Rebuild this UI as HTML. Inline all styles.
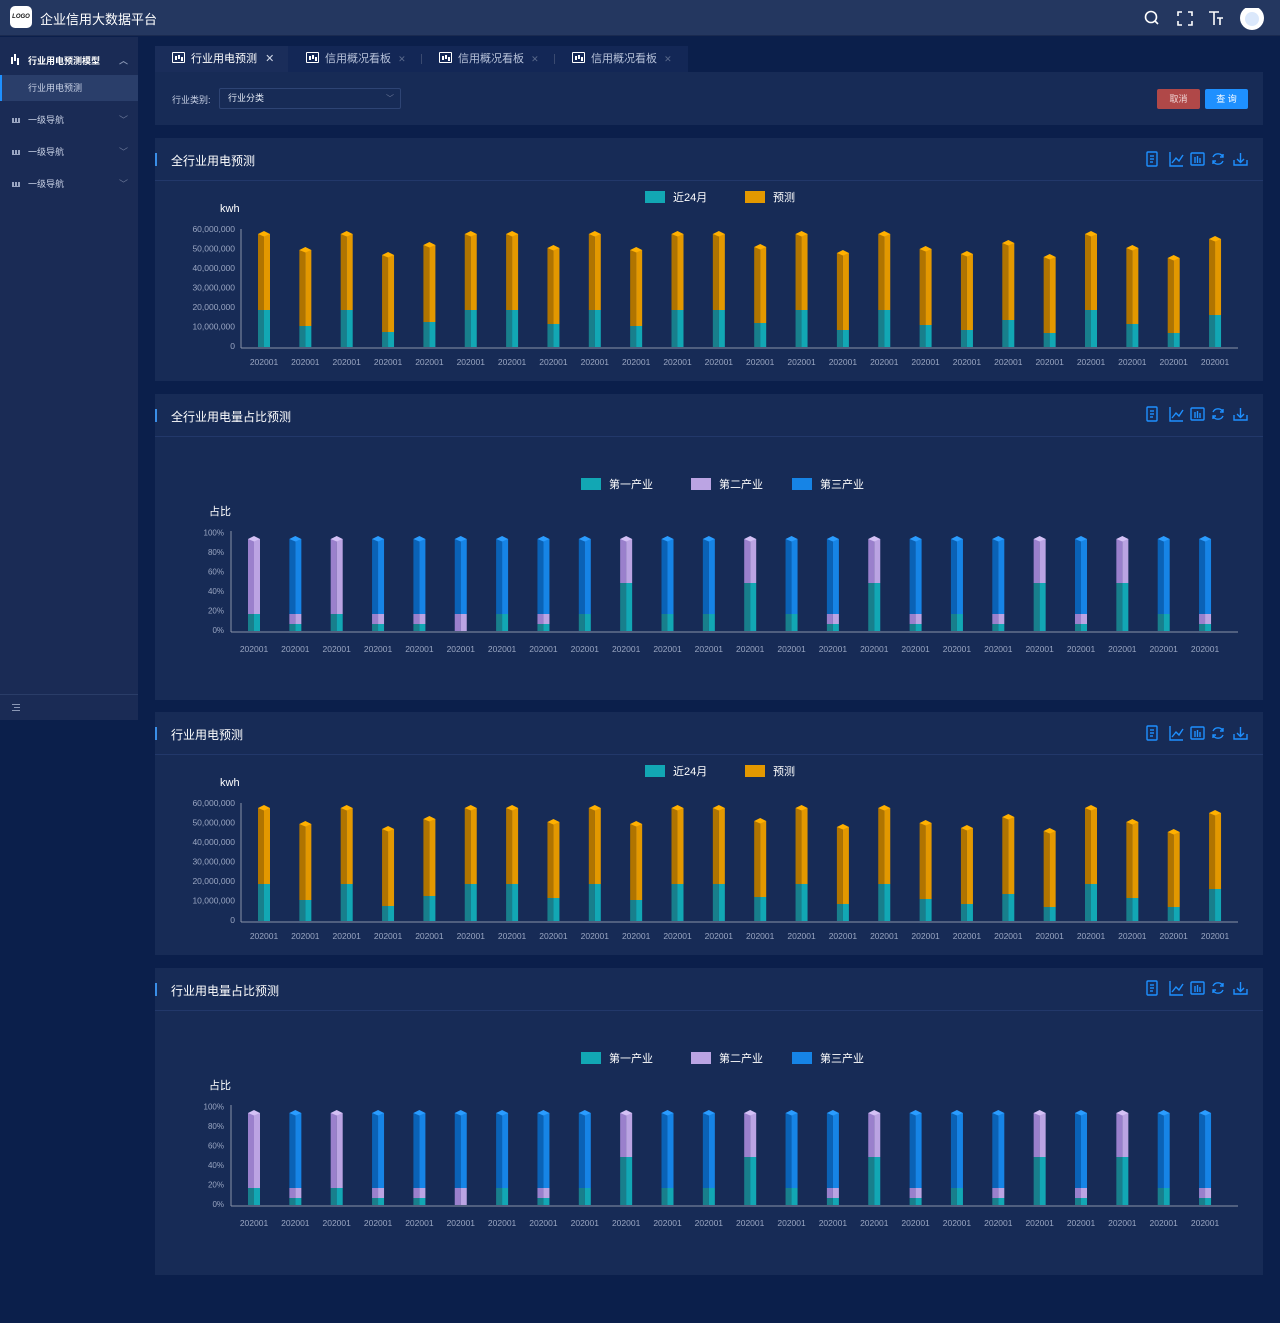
<!DOCTYPE html>
<html><head><meta charset="utf-8">
<style>
*{margin:0;padding:0;box-sizing:border-box}
body{width:1280px;height:1323px;background:#0b1f4b;font-family:"Liberation Sans","Noto Sans CJK SC",sans-serif;color:#e6ecf7;position:relative;overflow:hidden}
.hdr{position:absolute;left:0;top:0;width:1280px;height:36px;background:#243760;border-bottom:1px solid #1a2a50}
.logo{position:absolute;left:10px;top:6px;width:22px;height:22px;background:#fff;border-radius:5px;color:#111;font-size:6px;font-weight:bold;font-style:italic;text-align:center;line-height:22px}
.title{position:absolute;left:40px;top:9px;font-size:13px;color:#fff}
.side{position:absolute;left:0;top:37px;width:138px;height:683px;background:#1a2b55}
.side .it{position:absolute;left:0;width:138px;height:26px;font-size:9px;line-height:26px;color:#c9d2e6}
.abs{position:absolute}
.panel{position:absolute;left:155px;width:1108px;background:#172b56}
.ph{position:absolute;left:0;top:0;width:1108px;height:43px;border-bottom:1px solid #22386a}
.ph .mk{position:absolute;left:0;top:15px;width:2px;height:13px;background:#3a8ee8}
.ph .t{position:absolute;left:16px;top:14px;font-size:12px;color:#fff}
.tab{position:absolute;top:46px;height:26px;font-size:11px;line-height:26px;color:#b7c2d9}
.ti{display:inline-block;width:13px;height:11px;border:1.5px solid #fff;border-radius:1px;vertical-align:-1px;margin-right:6px;position:relative}
.ti:after{content:"";position:absolute;left:2px;top:3px;width:1.5px;height:4px;background:#fff;box-shadow:3px -1px 0 #fff,6px 1px 0 #fff}
</style></head><body>
<div class="hdr">
<div class="logo">LOGO</div>
<div class="title">企业信用大数据平台</div>
<svg class="abs" style="left:1140px;top:8px" width="130" height="22" viewBox="0 0 130 22">
<g fill="none" stroke="#fff" stroke-width="1.6">
<circle cx="11" cy="9" r="5.5"/><line x1="15" y1="13" x2="18" y2="16"/>
<path d="M38 8V4h4M48 4h4v4M52 13v4h-4M42 17h-4v-4"/>
<path d="M69 4h10M74 4v13M77 10h6M80 10v7"/>
</g>
<circle cx="112" cy="10" r="12" fill="#fff"/>
<circle cx="112" cy="11" r="7" fill="#dbe8fb"/>
</svg>
</div>
<div class="side">
<div class="it" style="top:11px;color:#fff;font-weight:bold"><span style="position:absolute;left:11px;top:9px;width:2px;height:7px;background:#fff;box-shadow:3px -3px 0 #fff,6px 1px 0 #fff"></span><span style="margin-left:28px">行业用电预测模型</span><span style="position:absolute;left:119px;top:0;color:#8a97b5">︿</span></div>
<div class="it" style="top:38px;background:#2a3e6a;border-left:2px solid #1e90ff"><span style="margin-left:26px">行业用电预测</span></div>
<div class="it" style="top:70px"><span style="position:absolute;left:12px;top:11px;width:8px;height:5px;border-bottom:1px solid #9aa6c2;background:linear-gradient(90deg,#9aa6c2 2px,transparent 2px 3px,#9aa6c2 3px 5px,transparent 5px 6px,#9aa6c2 6px)"></span><span style="margin-left:28px">一级导航</span><span style="position:absolute;left:119px;color:#6a7797">﹀</span></div>
<div class="it" style="top:102px"><span style="position:absolute;left:12px;top:11px;width:8px;height:5px;border-bottom:1px solid #9aa6c2;background:linear-gradient(90deg,#9aa6c2 2px,transparent 2px 3px,#9aa6c2 3px 5px,transparent 5px 6px,#9aa6c2 6px)"></span><span style="margin-left:28px">一级导航</span><span style="position:absolute;left:119px;color:#6a7797">﹀</span></div>
<div class="it" style="top:134px"><span style="position:absolute;left:12px;top:11px;width:8px;height:5px;border-bottom:1px solid #9aa6c2;background:linear-gradient(90deg,#9aa6c2 2px,transparent 2px 3px,#9aa6c2 3px 5px,transparent 5px 6px,#9aa6c2 6px)"></span><span style="margin-left:28px">一级导航</span><span style="position:absolute;left:119px;color:#6a7797">﹀</span></div>
<div class="abs" style="left:0;top:657px;width:138px;height:1px;background:#2a3d68"></div>
<div class="abs" style="left:12px;top:667px;width:8px;height:7px;border-top:1px solid #8a97b5;border-bottom:1px solid #8a97b5"><div style="margin-top:2px;height:1px;background:#8a97b5;margin-left:2px"></div></div>
</div>
<div class="abs" style="left:155px;top:46px;width:533px;height:26px;background:#132756"></div>
<div class="tab" style="left:155px;width:133px;background:#1a2d5a;color:#fff;padding-left:17px"><span class="ti"></span>行业用电预测 <span style="margin-left:5px;color:#cfd6e6">✕</span></div>
<div class="tab" style="left:306px"><span class="ti"></span>信用概况看板 <span style="margin-left:4px;color:#5a6a8c;font-size:9px">✕</span></div>
<div class="abs" style="left:421px;top:54px;width:1px;height:10px;background:#3a4a70"></div>
<div class="tab" style="left:439px"><span class="ti"></span>信用概况看板 <span style="margin-left:4px;color:#5a6a8c;font-size:9px">✕</span></div>
<div class="abs" style="left:554px;top:54px;width:1px;height:10px;background:#3a4a70"></div>
<div class="tab" style="left:572px"><span class="ti"></span>信用概况看板 <span style="margin-left:4px;color:#5a6a8c;font-size:9px">✕</span></div>
<div class="panel" style="top:72px;height:53px">
<div class="abs" style="left:17px;top:21px;font-size:9px;color:#c9d2e6">行业类别:</div>
<div class="abs" style="left:64px;top:16px;width:182px;height:21px;border:1px solid #2e4474;border-radius:2px;font-size:9px;line-height:19px;padding-left:8px;color:#e6ecf7">行业分类<span style="position:absolute;right:6px;color:#6a7797;font-size:8px">﹀</span></div>
<div class="abs" style="left:1002px;top:17px;width:43px;height:20px;background:#b04848;border-radius:2px;font-size:9px;line-height:20px;text-align:center;color:#f0d8d8">取消</div>
<div class="abs" style="left:1050px;top:17px;width:43px;height:20px;background:#1e90ff;border-radius:2px;font-size:9px;line-height:20px;text-align:center;color:#fff">查 询</div>
</div>
<div class="panel" style="top:138px;height:243px"><div class="ph"><div class="mk"></div><div class="t">全行业用电预测</div></div></div>
<div class="panel" style="top:394px;height:306px"><div class="ph"><div class="mk"></div><div class="t">全行业用电量占比预测</div></div></div>
<div class="panel" style="top:712px;height:243px"><div class="ph"><div class="mk"></div><div class="t">行业用电预测</div></div></div>
<div class="panel" style="top:968px;height:307px"><div class="ph"><div class="mk"></div><div class="t">行业用电量占比预测</div></div></div>
<svg id="ov" class="abs" style="left:0;top:0" width="1280" height="1323" font-family="Liberation Sans, Noto Sans CJK SC, sans-serif"></svg>
<script>
var s='';
function icons(y){var g='<g fill="none" stroke="#1e90ff" stroke-width="1.4" transform="translate(0,'+(y-8)+')">';
g+='<rect x="1147" y="1" width="10" height="14" rx="1"/><line x1="1150" y1="5" x2="1154" y2="5"/><line x1="1150" y1="8" x2="1154" y2="8"/><line x1="1150" y1="11" x2="1153" y2="11"/>';
g+='<path d="M1170 1v14h13M1172 12l4-5 3 3 4-6"/>';
g+='<rect x="1191" y="2" width="13" height="12" rx="1"/><path d="M1195 6v6M1197.5 5v7M1200 7v5"/>';
g+='<path d="M1213 6a5.5 5.5 0 0 1 10 0M1223 10a5.5 5.5 0 0 1 -10 0"/><path d="M1223 3v3h-3M1213 13v-3h3" />';
g+='<path d="M1234 9v5h13v-5M1240.5 2v9M1237 8l3.5 3.5 3.5-3.5"/></g>';return g;}
function bar(cx,segs,w){ // segs: [ [yTop,yBot,dark,light,topc] ]
 var r='';for(var i=0;i<segs.length;i++){var a=segs[i];r+='<rect x="'+(cx-w/2)+'" y="'+a[0]+'" width="'+(w/2)+'" height="'+(a[1]-a[0])+'" fill="'+a[2]+'"/><rect x="'+cx+'" y="'+a[0]+'" width="'+(w/2)+'" height="'+(a[1]-a[0])+'" fill="'+a[3]+'"/>';}
 var t=segs[segs.length-1];var y=t[0];r+='<polygon points="'+(cx-w/2)+','+y+' '+cx+','+(y-3)+' '+(cx+w/2)+','+y+' '+cx+','+(y+2.5)+'" fill="'+t[4]+'"/>';return r;}
var O=['#b07400','#e39800','#ffb000'],T=['#187f8c','#12a7b4','#20c0cc'],P=['#9a80cc','#bba4e3','#d4c0f5'],B=['#0a62b6','#1684e6','#2a9cff'];
var tops=[234,250,234,255,245,234,234,248,234,250,234,234,247,234,253,234,249,254,243,257,234,248,258,239];
var tt=[310,326,310,332,322,310,310,324,310,326,310,310,323,310,330,310,325,330,320,333,310,324,333,315];
function chart1(d){
 s+=icons(159+d);
 s+='<rect x="645" y="'+(191+d)+'" width="20" height="12" fill="#12a7b4"/><text x="673" y="'+(201+d)+'" font-size="11" fill="#fff">近24月</text>';
 s+='<rect x="745" y="'+(191+d)+'" width="20" height="12" fill="#e39800"/><text x="773" y="'+(201+d)+'" font-size="11" fill="#fff">预测</text>';
 s+='<text x="220" y="'+(212+d)+'" font-size="11" fill="#fff">kwh</text>';
 var lb=['0','10,000,000','20,000,000','30,000,000','40,000,000','50,000,000','60,000,000'];
 for(var i=0;i<7;i++)s+='<text x="235" y="'+(349-i*19.5+d)+'" font-size="8.5" fill="#9aa6c2" text-anchor="end">'+lb[i]+'</text>';
 s+='<line x1="241" y1="'+(229+d)+'" x2="241" y2="'+(348+d)+'" stroke="#8a93a8"/><line x1="241" y1="'+(348+d)+'" x2="1238" y2="'+(348+d)+'" stroke="#8a93a8"/>';
 for(var i=0;i<24;i++){var cx=264+i*41.35;
  s+=bar(cx,[[tt[i]+d,347+d,T[0],T[1],T[2]],[tops[i]+d,tt[i]+d,O[0],O[1],O[2]]],12);
  s+='<text x="'+cx+'" y="'+(365+d)+'" font-size="8.5" fill="#9aa6c2" text-anchor="middle">202001</text>';}
}
var kinds=['p','bb','p','bb','bb','bp','bt','bb','bt','pt','bt','bt','pt','bt','bb','pt','bb','bt','bb','pt','bb','pt','bt','bb'];
function chart2(d){
 s+=icons(414+d);
 var L=[[581,'#12a7b4','第一产业'],[691,'#bba4e3','第二产业'],[792,'#1684e6','第三产业']];
 for(var i=0;i<3;i++)s+='<rect x="'+L[i][0]+'" y="'+(478+d)+'" width="20" height="12" fill="'+L[i][1]+'"/><text x="'+(L[i][0]+28)+'" y="'+(488+d)+'" font-size="11" fill="#fff">'+L[i][2]+'</text>';
 s+='<text x="209" y="'+(515+d)+'" font-size="11" fill="#fff">占比</text>';
 for(var i=0;i<6;i++)s+='<text x="224" y="'+(633-i*19.5+d)+'" font-size="8" fill="#9aa6c2" text-anchor="end">'+(i*20)+'%</text>';
 s+='<line x1="231" y1="'+(531+d)+'" x2="231" y2="'+(632+d)+'" stroke="#8a93a8"/><line x1="231" y1="'+(632+d)+'" x2="1238" y2="'+(632+d)+'" stroke="#8a93a8"/>';
 var z=631,top=539,y20=614,y10=624,y50=583;
 for(var i=0;i<24;i++){var cx=254+i*41.35,k=kinds[i],g;
  if(k=='p')g=[[y20,z,T[0],T[1],T[2]],[top,y20,P[0],P[1],P[2]]];
  else if(k=='pt')g=[[y50,z,T[0],T[1],T[2]],[top,y50,P[0],P[1],P[2]]];
  else if(k=='bb')g=[[y10,z,T[0],T[1],T[2]],[y20,y10,P[0],P[1],P[2]],[top,y20,B[0],B[1],B[2]]];
  else if(k=='bp')g=[[y20,z,P[0],P[1],P[2]],[top,y20,B[0],B[1],B[2]]];
  else g=[[y20,z,T[0],T[1],T[2]],[top,y20,B[0],B[1],B[2]]];
  for(var j=0;j<g.length;j++){g[j][0]+=d;g[j][1]+=d;}
  s+=bar(cx,g,12);
  s+='<text x="'+cx+'" y="'+(652+d)+'" font-size="8.5" fill="#9aa6c2" text-anchor="middle">202001</text>';}
}
chart1(0);chart2(0);chart1(574);chart2(574);
document.getElementById('ov').innerHTML=s;
</script>
</body></html>
